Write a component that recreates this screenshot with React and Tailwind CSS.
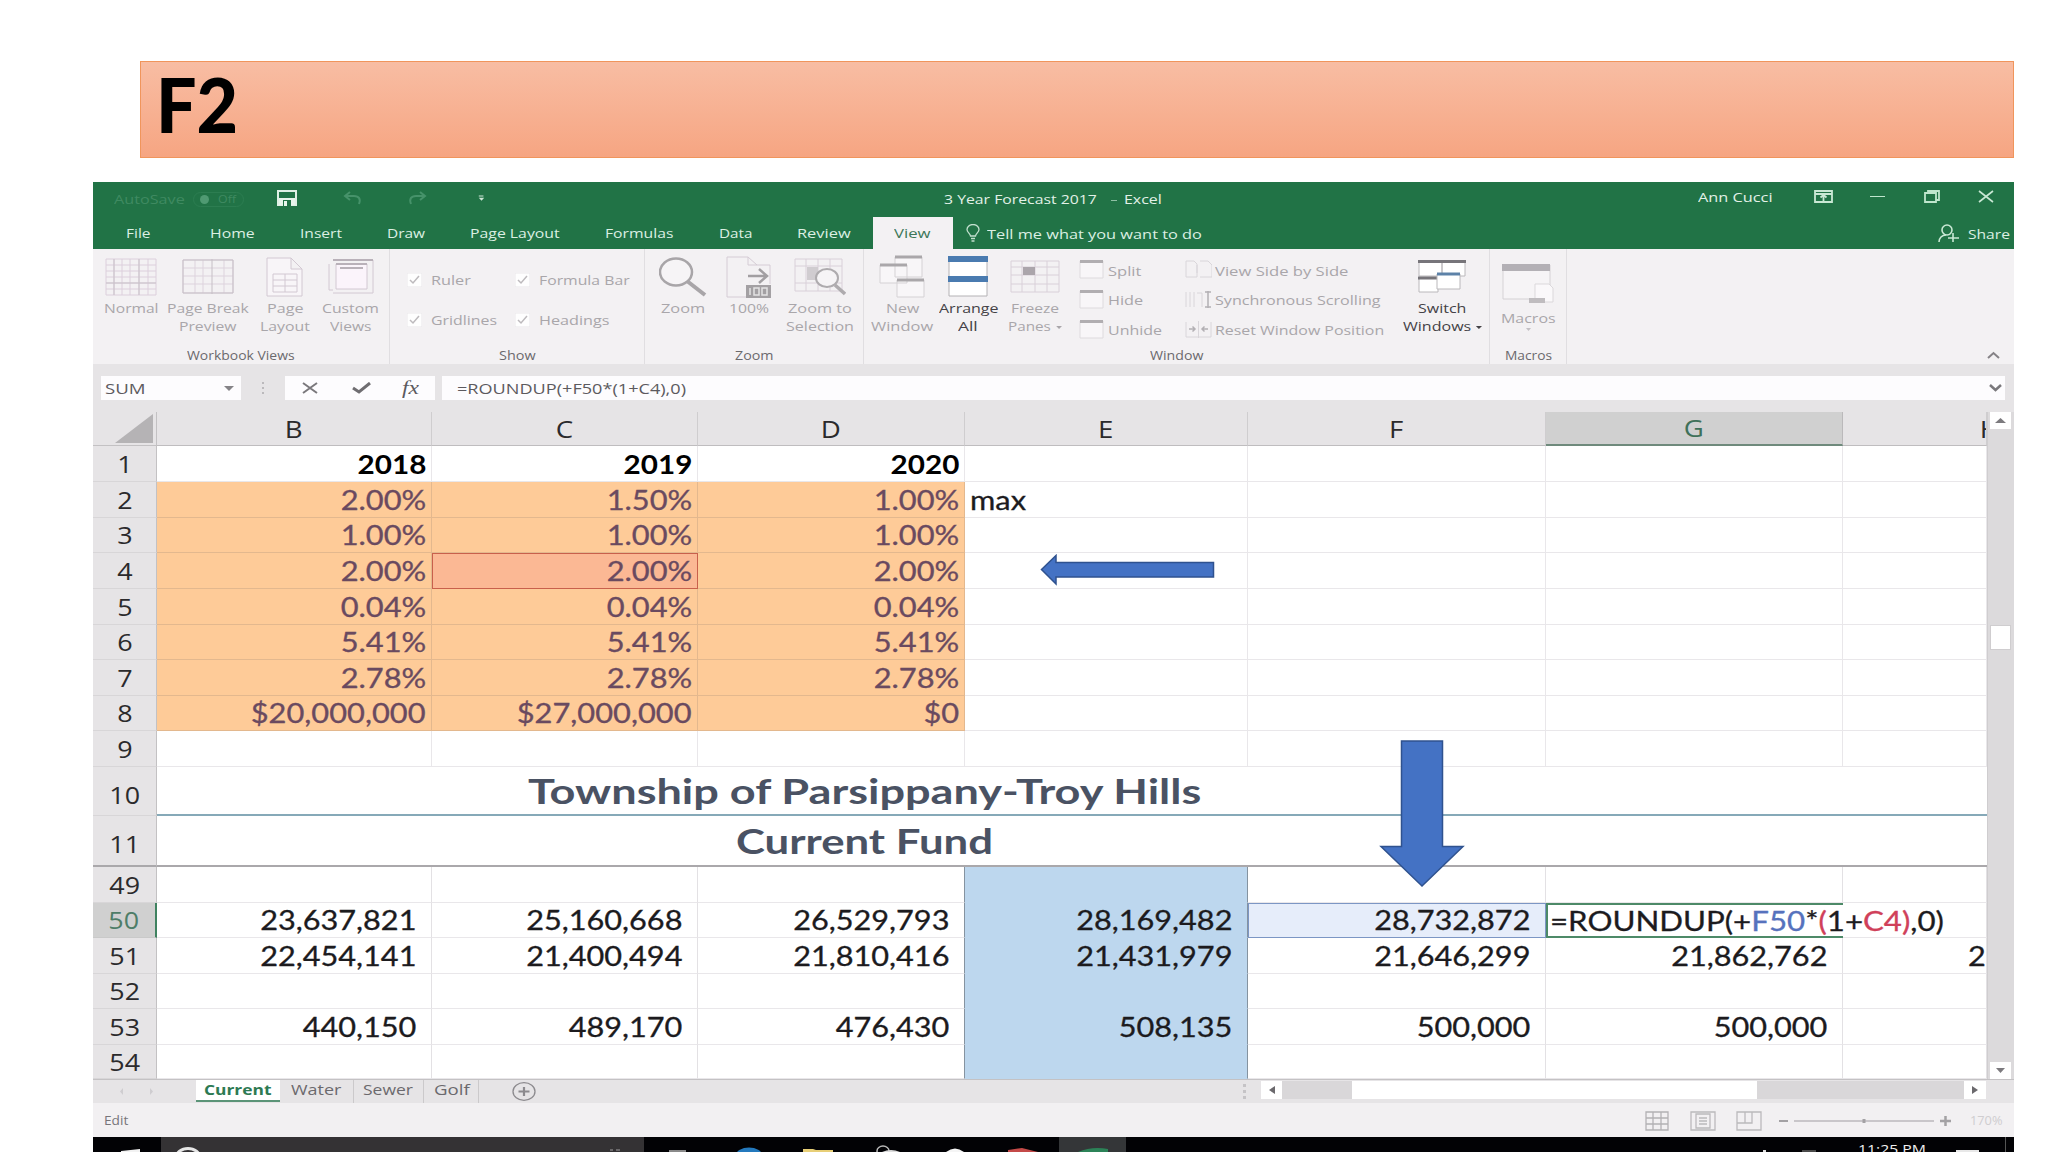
import React, { useLayoutEffect, useRef } from "react";
import clsx from "clsx";

// Stretches its text to the width set on the outer span
function Fit({ children, className }) {
  const outer = useRef(null);
  const inner = useRef(null);

  useLayoutEffect(() => {
    const fit = () => {
      if (!outer.current || !inner.current) return;
      const ratio = outer.current.clientWidth / inner.current.offsetWidth;
      inner.current.style.transform = `scaleX(${ratio})`;
    };
    fit();
    document.fonts?.ready.then(fit);
  }, []);

  return (
    <span ref={outer} className={clsx("inline-block shrink-0 whitespace-nowrap text-left", className)}>
      <span ref={inner} className="inline-block origin-left">{children}</span>
    </span>
  );
}

const menuTabs = [
  { name: "File", cls: "ml-[33px] w-[25px]" },
  { name: "Home", cls: "ml-[59px] w-[45px]" },
  { name: "Insert", cls: "ml-[45px] w-[42px]" },
  { name: "Draw", cls: "ml-[45px] w-[38px]" },
  { name: "Page Layout", cls: "ml-[45px] w-[90px]" },
  { name: "Formulas", cls: "ml-[45px] w-[69px]" },
  { name: "Data", cls: "ml-[45px] w-[34px]" },
  { name: "Review", cls: "ml-[44px] w-[53px]" },
];

const columns = [
  { name: "B" }, { name: "C" }, { name: "D" }, { name: "E" }, { name: "F" }, { name: "G", active: true }, { name: "H", cut: true },
];

const topRows = [
  { n: 1, h: "h-[36px]", cells: ["2018", "2019", "2020", "", "", "", ""], bold: true },
  { n: 2, h: "h-[36px]", cells: ["2.00%", "1.50%", "1.00%", "max", "", "", ""], orange: true },
  { n: 3, h: "h-[35px]", cells: ["1.00%", "1.00%", "1.00%", "", "", "", ""], orange: true },
  { n: 4, h: "h-[36px]", cells: ["2.00%", "2.00%", "2.00%", "", "", "", ""], orange: true },
  { n: 5, h: "h-[36px]", cells: ["0.04%", "0.04%", "0.04%", "", "", "", ""], orange: true },
  { n: 6, h: "h-[35px]", cells: ["5.41%", "5.41%", "5.41%", "", "", "", ""], orange: true },
  { n: 7, h: "h-[36px]", cells: ["2.78%", "2.78%", "2.78%", "", "", "", ""], orange: true },
  { n: 8, h: "h-[35px]", cells: ["$20,000,000", "$27,000,000", "$0", "", "", "", ""], orange: true },
  { n: 9, h: "h-[36px]", cells: ["", "", "", "", "", "", ""] },
];

const bottomRows = [
  { n: 49, h: "h-[36px]", cells: ["", "", "", "", "", "", ""] },
  { n: 50, h: "h-[35px]", cells: ["23,637,821", "25,160,668", "26,529,793", "28,169,482", "28,732,872", "", ""] },
  { n: 51, h: "h-[36px]", cells: ["22,454,141", "21,400,494", "21,810,416", "21,431,979", "21,646,299", "21,862,762", "22"] },
  { n: 52, h: "h-[35px]", cells: ["", "", "", "", "", "", ""] },
  { n: 53, h: "h-[36px]", cells: ["440,150", "489,170", "476,430", "508,135", "500,000", "500,000", ""] },
  { n: 54, h: "h-[34px]", cells: ["", "", "", "", "", "", ""] },
];

const gridCols = "grid grid-cols-[64px_275px_266px_267px_283px_298px_297px_144px]";

function TitleBar() {
  return (
    <div className="flex h-[35px] items-center text-[13px] text-[#e3f1e8]">
      <Fit className="ml-[21px] w-[71px] text-[#3f8a61]">AutoSave</Fit>
      <div className="ml-[8px] flex h-[15px] w-[51px] items-center rounded-full border border-[#2c7d51] pl-[6px] text-[11px] text-[#3f8a61]">
        <span className="h-[9px] w-[9px] rounded-full bg-[#4f9a72]" />
        <Fit className="ml-[9px] w-[18px]">Off</Fit>
      </div>
      <svg className="mb-[3px] ml-[33px]" width="20" height="16" viewBox="0 0 20 16">
        <path d="M1 1h18v14H1z" fill="none" stroke="#dff0e5" strokeWidth="2" />
        <path d="M2 8h16v7H2z" fill="#e8f5ec" />
        <path d="M6 10h8v6H6z" fill="#217346" />
        <path d="M7 11h3v5H7z" fill="#e8f5ec" />
      </svg>
      <svg className="mb-[2px] ml-[46px]" width="20" height="15" viewBox="0 0 20 15" fill="none" stroke="#46926a" strokeWidth="2">
        <path d="M7 1 2 5l5 4M2 5h9c5 0 7 3 5 8" />
      </svg>
      <svg className="mb-[2px] ml-[44px]" width="20" height="15" viewBox="0 0 20 15" fill="none" stroke="#46926a" strokeWidth="2">
        <path d="m13 1 5 4-5 4M18 5H9C4 5 2 8 4 13" />
      </svg>
      <svg className="mb-[3px] ml-[51px]" width="7" height="7" viewBox="0 0 9 8" fill="#cfe6d8">
        <path d="M1 0h6v1.500H1zM1 3h7L4.500 7z" />
      </svg>
      <Fit className="mt-[1px] ml-[459px] w-[153px]">3 Year Forecast 2017</Fit>
      <span className="mt-[2px] ml-[14px] h-px w-[6px] bg-[#8fc0a4]" />
      <Fit className="mt-[1px] ml-[7px] w-[38px]">Excel</Fit>
      <Fit className="mb-[4px] ml-[536px] w-[74px]">Ann Cucci</Fit>
      <svg className="mb-[6px] ml-[42px]" width="19" height="13" viewBox="0 0 19 13" fill="none" stroke="#c9e8d4" strokeWidth="1.800">
        <path d="M1 1h17v11H1zM1 4h17M9.500 11V5M6.500 7.500l3-2.500 3 2.500" />
      </svg>
      <span className="mb-[6px] ml-[37px] h-[1.500px] w-[15px] bg-[#bfe6cd]" />
      <svg className="mb-[6px] ml-[39px]" width="16" height="13" viewBox="0 0 16 13" fill="none" stroke="#bfe6cd" strokeWidth="1.800">
        <path d="M1 3h11v9H1zM4 3V1h11v9h-3" />
      </svg>
      <svg className="mb-[6px] ml-[38px]" width="16" height="13" viewBox="0 0 16 13" fill="none" stroke="#c9e8d4" strokeWidth="1.600">
        <path d="m1 1 14 11M15 1 1 12" />
      </svg>
    </div>
  );
}

function MenuBar() {
  return (
    <div className="flex h-[32px] items-center text-[13px] text-[#dcefe3]">
      {menuTabs.map((tab) => (
        <Fit key={tab.name} className={clsx("mt-[2px]", tab.cls)}>{tab.name}</Fit>
      ))}
      <div className="ml-[23px] flex h-[32px] w-[80px] items-center bg-[#f3f1f3] pt-[2px] pl-[21px] text-[#3c7758]">
        <Fit className="w-[36px]">View</Fit>
      </div>
      <svg className="ml-[13px]" width="14" height="18" viewBox="0 0 14 18" fill="none" stroke="#c2e0ce" strokeWidth="1.300">
        <path d="M4.500 12C4 9 1 8.500 1 5.500a6 5 0 0 1 12 0C13 8.500 10 9 9.500 12zM5 14.500h4M5.500 17h3" />
      </svg>
      <Fit className="mt-[4px] ml-[7px] w-[215px]">Tell me what you want to do</Fit>
      <svg className="ml-[736px]" width="21" height="19" viewBox="0 0 21 19" fill="none" stroke="#c9e8d4" strokeWidth="1.600">
        <circle cx="9" cy="6" r="5" />
        <path d="M1 18c0-4 3-7 7-7M15 9v9M10 14h11" />
      </svg>
      <Fit className="mt-[4px] ml-[9px] w-[42px]">Share</Fit>
    </div>
  );
}

function Caret() {
  return (
    <svg className="ml-[4px] inline-block align-middle" width="5" height="3" viewBox="0 0 5 3" fill="currentColor"><path d="M0 0h5L2.500 3z" /></svg>
  );
}

// Large ribbon button: icon above one or two label lines
function BigButton({ className, icon, lines, dark, iconBox = "h-[41px]" }) {
  return (
    <div className={clsx("flex shrink-0 flex-col items-center", dark ? "text-[#444246]" : "text-[#a9a6aa]", className)}>
      <div className={clsx("mb-[2px] flex items-center justify-center", iconBox)}>{icon}</div>
      {lines.map(([text, w], i) => (
        <Fit key={i} className={clsx("h-[17.500px] leading-[18px]", w)}>{text}</Fit>
      ))}
    </div>
  );
}

function Group({ className, label, labelWidth, children }) {
  return (
    <div className={clsx("flex h-[115px] shrink-0 flex-col border-r border-[#e0dee1]", className)}>
      <div className="flex h-[98px]">{children}</div>
      <div className="flex justify-center text-[12px] leading-[17px] text-[#6b696d]">
        <Fit className={labelWidth}>{label}</Fit>
      </div>
    </div>
  );
}

function Check({ label, className, width }) {
  return (
    <div className={clsx("flex h-[20px] items-center", className)}>
      <svg width="15" height="14" viewBox="0 0 15 14">
        <path d="M0 0h15v14H0z" fill="#fefefe" stroke="#e9e7ea" />
        <path d="m3 7 3 3 6-7" fill="none" stroke="#bdbabd" strokeWidth="1.500" />
      </svg>
      <Fit className={clsx("mt-[1px] ml-[9px]", width)}>{label}</Fit>
    </div>
  );
}

function PaneIcon() {
  return (
    <svg width="25" height="19" viewBox="0 0 25 19">
      <path d="M1 1h23v17H1z" fill="#f8f6f8" stroke="#dedbde" />
      <path d="M1 0h23v3H1z" fill="#b1aeb1" />
    </svg>
  );
}

const sideIcons = [
  <path d="M1 1h8l3 3v13H1zM15 1h8l4 4v12H15M12 5v8" />,
  <path d="M1 2v15M5 2v15M9 2v15M12 3h5v14" />,
  <path d="M1 2v15M1 17h25V2M13.500 1v17" />,
];

// Darker arrow strokes laid over each of the side icons
const sideArrows = [
  null,
  <path d="M23 1v17M20 2h6M20 17h6" />,
  <path d="M4 9h6M7.500 6.500 10 9l-2.500 2.500M23 9h-6M19.500 6.500 17 9l2.500 2.500" />,
];

const sideItems = [
  ["View Side by Side", "w-[133px]"],
  ["Synchronous Scrolling", "w-[166px]"],
  ["Reset Window Position", "w-[169px]"],
];

function Ribbon() {
  return (
    <div className="flex h-[115px] bg-[#f3f1f3] text-[13px] text-[#a9a6aa]">
      <Group className="w-[297px]" label="Workbook Views" labelWidth="w-[108px]">
        <BigButton
          className="mt-[7px] ml-[10px] w-[55px]"
          lines={[["Normal", "w-[54px]"]]}
          icon={
            <svg width="52" height="38" viewBox="0 0 52 38" fill="none" stroke="#dccfdc">
              <path d="M1 1h50v36H1zM1 7h50M1 13h50M1 19h50M1 25h50M1 31h50M9 1v36M17 1v36M25 1v36M34 1v36M43 1v36" />
              <path d="M1 25h50M9 1v36M34 1v36" stroke="#c9c2c9" />
            </svg>
          }
        />
        <BigButton
          className="mt-[7px] ml-[7px] w-[86px]"
          lines={[["Page Break", "w-[82px]"], ["Preview", "w-[58px]"]]}
          icon={
            <svg width="52" height="35" viewBox="0 0 52 35" fill="none" stroke="#ddd3dd">
              <path d="M1 1h50v33H1zM1 9h50M1 17h50M1 25h50M13 1v33M21 1v33M42 1v33" />
              <path d="M30 0v35M1 1h50v33H1z" stroke="#c6bfc6" />
            </svg>
          }
        />
        <BigButton
          className="mt-[7px] ml-[8px] w-[51px]"
          lines={[["Page", "w-[36px]"], ["Layout", "w-[50px]"]]}
          icon={
            <svg width="38" height="40" viewBox="0 0 38 40" fill="#f8f5f8" stroke="#d2c8d2">
              <path d="M1 1h24l11 11v27H1zM25 1v11h11M7 17h24v18H7zM7 23h24M7 29h24M19 17v18" />
            </svg>
          }
        />
        <BigButton
          className="mt-[7px] ml-[12px] w-[57px]"
          lines={[["Custom", "w-[57px]"], ["Views", "w-[42px]"]]}
          icon={
            <svg width="46" height="36" viewBox="0 0 46 36" fill="none" stroke="#d2c8d2">
              <path d="M5 1h40v33H5M1 5v26h4" />
              <path d="M8 5h31v25H8z" fill="#fbf4fb" />
              <path d="M8 5h31M12 9h23M5 1h40" stroke="#b9b1b9" strokeWidth="1.800" />
            </svg>
          }
        />
      </Group>

      <Group className="w-[255px]" label="Show" labelWidth="w-[36px]">
        <div className="ml-[17px] w-[108px]">
          <Check className="mt-[21px]" label="Ruler" width="w-[40px]" />
          <Check className="mt-[20px]" label="Gridlines" width="w-[66px]" />
        </div>
        <div>
          <Check className="mt-[21px]" label="Formula Bar" width="w-[91px]" />
          <Check className="mt-[20px]" label="Headings" width="w-[71px]" />
        </div>
      </Group>

      <Group className="w-[219px]" label="Zoom" labelWidth="w-[38px]">
        <BigButton
          className="mt-[7px] ml-[14px] w-[47px]"
          lines={[["Zoom", "w-[44px]"]]}
          icon={
            <svg width="48" height="40" viewBox="0 0 48 40" fill="none" stroke="#a8a5a8">
              <ellipse cx="17" cy="15" rx="16" ry="13.500" strokeWidth="2.500" fill="#f6f4f6" />
              <path d="m28 24 18 14" strokeWidth="4" />
            </svg>
          }
        />
        <BigButton
          className="mt-[7px] ml-[19px] w-[47px]"
          lines={[["100%", "w-[40px]"]]}
          icon={
            <svg width="45" height="42" viewBox="0 0 45 42" fill="none">
              <path d="M1 41V1h21l9 8h13v19M22 1v8h9M1 41h19" stroke="#d5ccd5" />
              <path d="M22 20h18M33 13l8 7-8 7" stroke="#a29fa2" strokeWidth="2.500" />
              <path d="M20 29h25v13H20z" fill="#a3a0a3" />
              <path d="M24 32v7M28 32h5v7h-5zM36 32h5v7h-5z" stroke="#e4e2e4" strokeWidth="1.500" />
            </svg>
          }
        />
        <BigButton
          className="mt-[7px] ml-[13px] w-[70px]"
          lines={[["Zoom to", "w-[64px]"], ["Selection", "w-[68px]"]]}
          icon={
            <svg width="52" height="38" viewBox="0 0 52 38" fill="none">
              <path d="M1 1h47v32H1zM1 8h47M1 25h47M12 1v32M24 1v32M36 1v32" stroke="#d9d0d9" />
              <path d="M13 9h11v13H13z" fill="#d0ccd0" />
              <ellipse cx="33" cy="20" rx="11" ry="9" fill="#f6f4f6" stroke="#aeabae" strokeWidth="2" />
              <path d="m41 27 10 9" stroke="#aeabae" strokeWidth="3.500" />
            </svg>
          }
        />
      </Group>

      <Group className="w-[626px]" label="Window" labelWidth="w-[53px]">
        <BigButton
          className="mt-[7px] ml-[6px] w-[64px]"
          lines={[["New", "w-[33px]"], ["Window", "w-[62px]"]]}
          icon={
            <svg width="46" height="43" viewBox="0 0 46 43" fill="#f8f6f8" stroke="#d5d2d5">
              <path d="M16 2h27v20H16zM1 10h27v18H1zM18 25h27v17H18z" />
              <path d="M16 2h27M1 10h27M18 25h27" stroke="#aaa7aa" strokeWidth="3" />
            </svg>
          }
        />
        <BigButton
          className="mt-[7px] ml-[4px] w-[60px]"
          dark
          lines={[["Arrange", "w-[59px]"], ["All", "w-[20px]"]]}
          icon={
            <svg width="40" height="41" viewBox="0 0 40 41">
              <path d="M1 1h38v39H1z" fill="#fff" stroke="#b4b2b5" />
              <path d="M0 0h40v6H0zM0 20h40v6H0z" fill="#4a7bb0" />
            </svg>
          }
        />
        <BigButton
          className="mt-[7px] ml-[10px] w-[54px]"
          lines={[["Freeze", "w-[48px]"], [<>Panes<Caret /></>, "w-[54px]"]]}
          icon={
            <svg width="50" height="35" viewBox="0 0 50 35" fill="none">
              <path d="M1 2h48v31H1zM1 8h48M1 16h48M1 25h48M12 2v31M25 2v31M37 2v31" stroke="#d9d0d9" />
              <path d="M13 8h12v8H13z" fill="#aba5ab" />
            </svg>
          }
        />
        <div className="ml-[17px] flex w-[106px] flex-col pt-[9px]">
          {[["Split", "w-[33px]"], ["Hide", "w-[35px]"], ["Unhide", "w-[54px]"]].map(([name, w]) => (
            <div key={name} className="flex h-[30px] items-center pb-[6px]">
              <PaneIcon />
              <Fit className={clsx("mt-[3px] ml-[4px]", w)}>{name}</Fit>
            </div>
          ))}
        </div>
        <div className="flex w-[217px] flex-col pt-[9px]">
          {sideItems.map(([name, w], i) => (
            <div key={name} className="flex h-[30px] items-center pb-[6px]">
              <svg width="27" height="19" viewBox="0 0 27 19" fill="none" stroke="#d9d6da">
                {sideIcons[i]}
                <g stroke="#b3b0b4" strokeWidth="1.500">{sideArrows[i]}</g>
              </svg>
              <Fit className={clsx("mt-[3px] ml-[3px]", w)}>{name}</Fit>
            </div>
          ))}
        </div>
        <BigButton
          className="mt-[7px] w-[80px]"
          dark
          lines={[["Switch", "w-[48px]"], [<>Windows<Caret /></>, "w-[79px]"]]}
          icon={
            <svg width="48" height="34" viewBox="0 0 48 34" fill="#fff" stroke="#bab8bb">
              <path d="M1 1h23v15H1zM24 1h23v15H24zM1 18h19v14H1z" />
              <path d="M0 1.500h48M0 18h20" stroke="#77757a" strokeWidth="3" />
              <path d="M19 14h23v15H19z" />
              <path d="M19 14h23" stroke="#5d82a8" strokeWidth="3" />
            </svg>
          }
        />
      </Group>

      <Group className="w-[77px]" label="Macros" labelWidth="w-[47px]">
        <div className="flex flex-col items-center">
          <BigButton
            className="mt-[12px] ml-[10px] w-[56px]"
            iconBox="h-[46px]"
            lines={[["Macros", "w-[54px]"]]}
            icon={
              <svg width="53" height="40" viewBox="0 0 53 40">
                <path d="M1 1h47v34H1z" fill="#f6f4f6" stroke="#d5d2d5" />
                <path d="M0 0h48v7H0z" fill="#b3b0b5" />
                <path d="M33 20h14l4 4v14H33z" fill="#faf8fa" stroke="#dbd8db" />
                <path d="M27 34h16v5H27z" fill="#bfbcbf" />
              </svg>
            }
          />
          <div className="mt-[1px] ml-[6px] flex text-[#c3c0c4]"><Caret /></div>
        </div>
      </Group>
      <svg className="mt-[102px] ml-[420px]" width="13" height="8" viewBox="0 0 13 8" fill="none" stroke="#858286" strokeWidth="2">
        <path d="m1 7 5.500-5L12 7" />
      </svg>
    </div>
  );
}

function FormulaBar() {
  return (
    <div className="flex h-[48px] items-start bg-[#e6e4e6] pt-[12px] text-[14px] text-[#5c5a5e]">
      <div className="ml-[8px] flex h-[24px] w-[140px] items-center bg-[#fdfcfe] pl-[4px]">
        <Fit className="w-[40px]">SUM</Fit>
        <svg className="ml-[79px]" width="10" height="5" viewBox="0 0 10 5" fill="#858387"><path d="M0 0h10L5 5z" /></svg>
      </div>
      <div className="ml-[21px] flex h-[24px] w-[2px] flex-col justify-center gap-[3px]">
        <span className="h-[2px] bg-[#bbb9bc]" />
        <span className="h-[2px] bg-[#bbb9bc]" />
        <span className="h-[2px] bg-[#bbb9bc]" />
      </div>
      <div className="ml-[21px] flex h-[24px] w-[150px] items-center bg-[#fdfcfe] pl-[17px]">
        <svg width="16" height="12" viewBox="0 0 16 12" fill="none" stroke="#7a787c" strokeWidth="2"><path d="m1 1 14 10M15 1 1 11" /></svg>
        <svg className="ml-[34px]" width="19" height="12" viewBox="0 0 19 12" fill="none" stroke="#6f6d71" strokeWidth="3"><path d="m1 6 6 4L18 1" /></svg>
        <Fit className="ml-[31px] w-[17px] font-['Liberation_Serif',serif] text-[18px] leading-[22px] italic">fx</Fit>
      </div>
      <div className="ml-[7px] flex h-[24px] w-[1563px] items-center bg-[#fdfcfe] pl-[15px]">
        <Fit className="w-[229px]">=ROUNDUP(+F50*(1+C4),0)</Fit>
        <svg className="ml-[1303px]" width="13" height="8" viewBox="0 0 13 8" fill="none" stroke="#7a787c" strokeWidth="2.500"><path d="m1 1 5.500 5L12 1" /></svg>
      </div>
    </div>
  );
}

function RowHead({ n, low }) {
  const active = n === 50;
  return (
    <div className={clsx(
      "flex items-center justify-center border-r font-['Open_Sans',sans-serif] text-[24px] leading-none font-normal",
      low && "pt-[7px]",
      active ? "border-r-2 border-r-[#3f8260] border-b-[#c9c9c9] bg-[#d0d0d0] text-[#4e7d68]" : "border-r-[#c3c1c3] bg-[#e6e4e6] text-[#2b2a2c]",
      n === 11 ? "border-b-2 border-b-[#aaa8ab]" : "border-b",
      n !== 11 && !active && "border-b-[#d8d6d8]"
    )}>
      <span className="scale-x-[1.12]">{n}</span>
    </div>
  );
}

function TopCell({ row, text, col }) {
  const filled = row.orange && col < 3;
  const picked = row.n === 4 && col === 1;
  return (
    <div className={clsx(
      "flex items-center overflow-hidden border-r border-b leading-none",
      filled && "border-[#e3b88e] text-[#6a4a60]",
      filled && (picked ? "bg-[#fbb894] outline-1 -outline-offset-1 outline-[#c8604c]" : "bg-[#fecb98]"),
      !filled && "border-[#e9e7ea] bg-white",
      row.bold && "font-bold",
      row.bold ? "text-black" : !filled && "text-[#1c1b1e]",
      text === "max" ? "justify-start pl-[5px]" : "justify-end pr-[5px]"
    )}>
      <span
        className={clsx(
          text === "max" ? "origin-left" : "origin-right",
          row.bold ? "scale-x-[1.14]" : "scale-x-[1.185] [-webkit-text-stroke:0.3px]"
        )}
      >
        {text}
      </span>
    </div>
  );
}

function BottomCell({ row, text, col }) {
  if (row.n === 50 && col === 5) {
    return (
      <div className="z-10 flex items-center border-y-2 border-l-2 border-[#4d8a68] pl-[2px] leading-none whitespace-nowrap text-[#1c1b1e] [-webkit-text-stroke:0.3px]">
        <Fit className="w-[394px]">
          =ROUNDUP(+<span className="text-[#5672bd]">F50</span>*<span className="text-[#d0405a]">(</span>1+<span className="text-[#d0405a]">C4)</span>,0)
        </Fit>
      </div>
    );
  }
  const linked = row.n === 50 && col === 4;
  return (
    <div className={clsx(
      "flex items-center overflow-hidden border-r border-b leading-none text-[#1c1b1e]",
      col === 6 ? "justify-start pl-[125px]" : "justify-end pr-[15px]",
      col === 3 && "border-b-[#bdd7ee] bg-[#bdd7ee]",
      col !== 3 && "border-b-[#e9e7ea]",
      col !== 3 && (linked ? "bg-[#e6edfa] outline-1 -outline-offset-1 outline-[#7c96c4]" : "bg-white"),
      col === 2 || col === 3 ? "border-r-[#8593a0]" : "border-r-[#e3e1e4]"
    )}>
      <span className={clsx("scale-x-[1.18] [-webkit-text-stroke:0.3px]", col === 6 ? "origin-left" : "origin-right")}>{text}</span>
    </div>
  );
}

function Sheet() {
  return (
    <div className="w-[1894px] font-[Lato,sans-serif] text-[26px]">
      <div className={clsx(gridCols, "h-[34px] bg-[#e6e4e6]")}>
        <div className="flex items-end justify-end border-r border-b border-[#c3c1c3] pr-[3px] pb-[2px]">
          <svg width="38" height="29" viewBox="0 0 38 29" fill="#b5b3b5"><path d="M38 0v29H0z" /></svg>
        </div>
        {columns.map((c) => (
          <div
            key={c.name}
            className={clsx(
              "flex items-center overflow-hidden border-r font-['Open_Sans',sans-serif] text-[24px] leading-none",
              c.active ? "border-b-2 border-r-[#bbb9bb] border-b-[#6f8a7c] bg-[#d0d0d0] text-[#3f7159]" : "border-b border-r-[#cfcdcf] border-b-[#bfbdbf] text-[#2b2a2c]",
              c.cut ? "justify-start pl-[138px]" : "justify-center"
            )}
          >
            <span className="scale-x-[1.15]">{c.name}</span>
          </div>
        ))}
      </div>
      {topRows.map((row) => (
        <div key={row.n} className={clsx(gridCols, row.h)}>
          <RowHead n={row.n} />
          {row.cells.map((text, i) => <TopCell key={i} row={row} text={text} col={i} />)}
        </div>
      ))}
      <div className="grid h-[49px] grid-cols-[64px_1830px] font-bold text-[#4a5263]">
        <RowHead n={10} low />
        <div className="flex items-center border-b-2 border-[#86a9b8] bg-white pt-[1px] pl-[371px] text-[34px] leading-none">
          <Fit className="w-[673px]">Township of Parsippany-Troy Hills</Fit>
        </div>
      </div>
      <div className="grid h-[51px] grid-cols-[64px_1830px] font-bold text-[#4a5263]">
        <RowHead n={11} low />
        <div className="flex items-center border-b-2 border-[#aaa8ab] bg-white pt-[1px] pl-[579px] text-[34px] leading-none">
          <Fit className="w-[257px]">Current Fund</Fit>
        </div>
      </div>
      {bottomRows.map((row) => (
        <div key={row.n} className={clsx(gridCols, row.h)}>
          <RowHead n={row.n} />
          {row.cells.map((text, i) => <BottomCell key={i} row={row} text={text} col={i} />)}
        </div>
      ))}
    </div>
  );
}

function VerticalScroll() {
  return (
    <div className="flex w-[27px] flex-col border-l border-[#cfcdcf] bg-[#dcdadc] pl-[2px]">
      <div className="flex h-[17px] w-[21px] items-center justify-center bg-white">
        <svg width="11" height="5" viewBox="0 0 11 5" fill="#7c7a7e"><path d="M0 5h11L5.500 0z" /></svg>
      </div>
      <div className="mt-[196px] h-[25px] w-[21px] border border-[#cfcdcf] bg-white" />
      <div className="mt-[412px] flex h-[17px] w-[21px] items-center justify-center bg-white">
        <svg width="9" height="5" viewBox="0 0 9 5" fill="#7c7a7e"><path d="M0 0h9L4.500 5z" /></svg>
      </div>
    </div>
  );
}

function SheetTabs() {
  return (
    <div className="flex h-[24px] items-start border-t border-[#c4c2c4] bg-[#e6e4e6] text-[14px] leading-[19px] text-[#6b696d]">
      <svg className="mt-[7px] ml-[26px]" width="36" height="9" viewBox="0 0 36 9" fill="#cfcdd0"><path d="M4 1v7L1 4.500zM31 1v7l3-3.500z" /></svg>
      <div className="ml-[41px] h-[22px] w-[84px] border-b-2 border-[#5c9478] bg-white pl-[8px] font-bold text-[#2d7a53]">
        <Fit className="w-[67px]">Current</Fit>
      </div>
      <div className="h-[23px] w-[74px] border-r border-[#cbc9cb] pl-[11px]"><Fit className="w-[50px]">Water</Fit></div>
      <div className="h-[23px] w-[70px] border-r border-[#cbc9cb] pl-[9px]"><Fit className="w-[50px]">Sewer</Fit></div>
      <div className="h-[23px] w-[55px] border-r border-[#cbc9cb] pl-[10px]"><Fit className="w-[36px]">Golf</Fit></div>
      <svg className="mt-[2px] ml-[33px]" width="24" height="19" viewBox="0 0 24 19" fill="none" stroke="#8c8a8e" strokeWidth="1.300">
        <ellipse cx="12" cy="9.500" rx="11" ry="8.800" />
        <path d="M12 5v9M6.500 9.500h11" strokeWidth="2.200" />
      </svg>
      <div className="mt-[4px] ml-[707px] flex w-[3px] flex-col gap-[3px]">
        <span className="h-[3px] bg-[#c5c3c6]" />
        <span className="h-[3px] bg-[#c5c3c6]" />
        <span className="h-[3px] bg-[#c5c3c6]" />
      </div>
      <div className="mt-[1px] ml-[15px] flex h-[18px] w-[725px] bg-[#d9d7d9]">
        <div className="flex w-[21px] items-center justify-center bg-white">
          <svg width="6" height="8" viewBox="0 0 6 8" fill="#6b696d"><path d="M6 0v8L0 4z" /></svg>
        </div>
        <div className="ml-[70px] h-full w-[405px] bg-white" />
        <div className="ml-auto flex w-[22px] items-center justify-center bg-white">
          <svg width="6" height="8" viewBox="0 0 6 8" fill="#6b696d"><path d="M0 0v8l6-4z" /></svg>
        </div>
      </div>
    </div>
  );
}

function StatusBar() {
  return (
    <div className="flex h-[34px] items-center bg-[#f2f0f2] pt-[1px] text-[12px] text-[#77757a]">
      <Fit className="ml-[11px] w-[24px]">Edit</Fit>
      <svg className="ml-[1517px]" width="24" height="20" viewBox="0 0 24 20" fill="none" stroke="#b3b1b4" strokeWidth="1.300">
        <path d="M1 1h22v18H1zM1 7h22M1 13h22M8 1v18M16 1v18" />
      </svg>
      <svg className="ml-[21px]" width="26" height="20" viewBox="0 0 26 20" fill="none" stroke="#bbb9bc" strokeWidth="1.300">
        <path d="M1 1h24v18H1zM6 3h14v14H6zM9 7h8M9 10h8M9 13h8" />
      </svg>
      <svg className="ml-[20px]" width="26" height="20" viewBox="0 0 26 20" fill="none" stroke="#bbb9bc" strokeWidth="1.300">
        <path d="M1 1h24v18H1zM1 12h8V1M9 12h7V1" />
      </svg>
      <span className="ml-[17px] h-[2px] w-[9px] bg-[#a3a1a4]" />
      <svg className="ml-[6px]" width="140" height="8" viewBox="0 0 140 8"><path d="M0 4h140" stroke="#bbb9bc" strokeWidth="1.500" /><path d="M70 2v4" stroke="#a3a1a4" strokeWidth="3" /></svg>
      <svg className="ml-[6px]" width="11" height="10" viewBox="0 0 11 10" stroke="#a3a1a4" strokeWidth="2.500"><path d="M5.500 0v10M0 5h11" /></svg>
      <Fit className="ml-[19px] w-[33px] text-[#cfcdd0]">170%</Fit>
    </div>
  );
}

function Taskbar() {
  return (
    <div className="flex h-[15px] overflow-hidden bg-[#020205]">
      <svg className="ml-[24px] shrink-0" width="44" height="15" viewBox="0 0 44 15"><path d="M4 14 23 12v3H4z" fill="#f2f2f2" /></svg>
      <div className="flex w-[483px] shrink-0 bg-[#343234]">
        <svg width="483" height="15" viewBox="0 0 483 15" fill="none">
          <ellipse cx="27" cy="21" rx="12" ry="9.500" stroke="#e6e6e6" strokeWidth="3" />
          <path d="M449 13h3M455 13h4" stroke="#6a686a" strokeWidth="2" />
        </svg>
      </div>
      <svg className="shrink-0" width="560" height="15" viewBox="0 0 560 15">
        <path d="M415 0h67v15h-67z" fill="#343638" />
        <path d="M25 13h17v2H25z" fill="#8a8a8a" />
        <ellipse cx="105" cy="18" rx="13" ry="7.500" fill="#2479bd" />
        <path d="M159 12h10l3 1h17v2h-30z" fill="#e8cf77" />
        <ellipse cx="239" cy="14" rx="6" ry="5" fill="none" stroke="#b8b8b8" strokeWidth="1.500" />
        <path d="M238 15q9-4 18 0z" fill="#dcdcdc" />
        <path d="M302 15q9-7 18 0z" fill="#f5f5f5" />
        <path d="M364 13l14-2 16 4h-30z" fill="#c44a48" />
        <path d="M434 15q14-6 30-3v3z" fill="#2c8358" />
      </svg>
      <svg className="ml-[518px] shrink-0" width="94" height="15" viewBox="0 0 94 15"><path d="M41 13h3v2h-3z" fill="#ddd" /><path d="M80 13h14v2H80z" fill="#4a4a4a" /></svg>
      <Fit className="mt-[4px] ml-[42px] w-[68px] text-[13px] leading-[16px] text-[#f0f0f0]">11:25 PM</Fit>
      <span className="mt-[13px] ml-[30px] h-[2px] w-[23px] bg-[#e8e8e8]" />
      <span className="ml-[26px] h-[15px] w-px bg-[#555]" />
    </div>
  );
}

export default function App() {
  return (
    <div className="relative h-[1152px] w-[2048px] overflow-hidden bg-white font-['Open_Sans',sans-serif]">
      <div className="mt-[61px] ml-[140px] flex h-[97px] w-[1874px] items-center border border-[#f0955c] bg-linear-to-b from-[#f8bda3] to-[#f6a582] pl-[15px] font-[Lato,sans-serif] text-[76px] leading-none font-black text-black">
        <Fit className="-mt-[12px] w-[82px]">F2</Fit>
      </div>

      <div className="mt-[24px] ml-[93px] w-[1921px]">
        <div className="border-b border-[#bfe6cd] bg-[#217346]">
          <TitleBar />
          <MenuBar />
        </div>
        <div className="-mt-[1px]">
          <Ribbon />
        </div>
        <FormulaBar />
        <div className="flex">
          <Sheet />
          <VerticalScroll />
        </div>
        <SheetTabs />
        <StatusBar />
        <Taskbar />
      </div>

      {/* callout arrows drawn over the sheet */}
      <svg className="absolute top-[554px] left-[1040px] z-20" width="176" height="32" viewBox="0 0 176 32">
        <path d="M1.500 15.500 16 1.500v7h157.500v14.500H16v7z" fill="#4472c4" stroke="#2f528f" strokeWidth="1.500" />
      </svg>
      <svg className="absolute top-[740px] left-[1379px] z-20" width="86" height="148" viewBox="0 0 86 148">
        <path d="M22.500 1h41v105.500H84L43 146 2 106.500h20.500z" fill="#4472c4" stroke="#2f528f" strokeWidth="1.500" />
      </svg>
    </div>
  );
}
